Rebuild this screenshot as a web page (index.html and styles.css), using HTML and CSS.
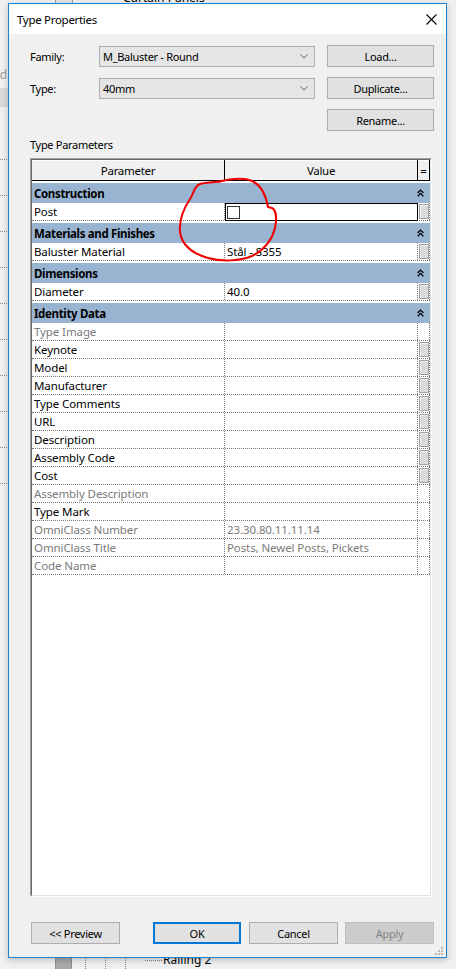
FILE: index.html
```html
<!DOCTYPE html>
<html>
<head>
<meta charset="utf-8">
<title>Type Properties</title>
<link rel="stylesheet" href="styles.css">
</head>
<body>
<div class="desk">
  <div class="bg-top-box"></div>
  <div class="bg-top-text">Curtain Panels</div>
  <div class="bg-left">
    <div class="bg-left-text">Id</div>
    <div class="bg-left-band"></div>
    <div class="bg-left-lines"></div>
  </div>
  <div class="bg-bottom">
    <div class="bg-bottom-box"></div>
    <div class="bg-vdots d1"></div>
    <div class="bg-vdots d2"></div>
    <div class="bg-vdots d3"></div>
    <div class="bg-leader"></div>
    <div class="bg-bottom-text">Railing 2</div>
  </div>

  <div class="dialog">
    <div class="titlebar">
      <span class="title">Type Properties</span>
      <svg class="close" width="11" height="11" viewBox="0 0 11 11"><path d="M0.5 0.5 L10.5 10.5 M10.5 0.5 L0.5 10.5" stroke="#000" stroke-width="1.1" fill="none"/></svg>
    </div>
    <div class="body">
      <div class="form">
        <span class="flabel">Family:</span>
        <div class="combo"><span>M_Baluster - Round</span><svg width="8" height="5" viewBox="0 0 8 5"><path d="M0.5 0.5 L4 4 L7.5 0.5" stroke="#606060" fill="none" stroke-width="1"/></svg></div>
        <button class="btn">Load...</button>
        <span class="flabel">Type:</span>
        <div class="combo"><span>40mm</span><svg width="8" height="5" viewBox="0 0 8 5"><path d="M0.5 0.5 L4 4 L7.5 0.5" stroke="#606060" fill="none" stroke-width="1"/></svg></div>
        <button class="btn">Duplicate...</button>
        <span></span>
        <span></span>
        <button class="btn">Rename...</button>
      </div>

      <div class="section-label">Type Parameters</div>

      <div class="grid-outer">
        <div class="grid-inner">
          <div class="ghead">
            <div>Parameter</div>
            <div>Value</div>
            <div>=</div>
          </div>

          <div class="band"><span>Construction</span><svg class="chev" width="7" height="8" viewBox="0 0 7 8"><path d="M0.6 4 L3.5 1.1 L6.4 4 M0.6 7.4 L3.5 4.5 L6.4 7.4" stroke="#000" stroke-width="1.3" fill="none"/></svg></div>
          <div class="row"><div class="p">Post</div><div class="v edit"><span class="check"></span></div><div class="b"><span class="mini"></span></div></div>

          <div class="band"><span>Materials and Finishes</span><svg class="chev" width="7" height="8" viewBox="0 0 7 8"><path d="M0.6 4 L3.5 1.1 L6.4 4 M0.6 7.4 L3.5 4.5 L6.4 7.4" stroke="#000" stroke-width="1.3" fill="none"/></svg></div>
          <div class="row"><div class="p">Baluster Material</div><div class="v">Stål - S355</div><div class="b"><span class="mini"></span></div></div>

          <div class="band"><span>Dimensions</span><svg class="chev" width="7" height="8" viewBox="0 0 7 8"><path d="M0.6 4 L3.5 1.1 L6.4 4 M0.6 7.4 L3.5 4.5 L6.4 7.4" stroke="#000" stroke-width="1.3" fill="none"/></svg></div>
          <div class="row"><div class="p">Diameter</div><div class="v">40.0</div><div class="b"><span class="mini"></span></div></div>

          <div class="band"><span>Identity Data</span><svg class="chev" width="7" height="8" viewBox="0 0 7 8"><path d="M0.6 4 L3.5 1.1 L6.4 4 M0.6 7.4 L3.5 4.5 L6.4 7.4" stroke="#000" stroke-width="1.3" fill="none"/></svg></div>
          <div class="row"><div class="p gray">Type Image</div><div class="v"></div><div class="b"></div></div>
          <div class="row"><div class="p">Keynote</div><div class="v"></div><div class="b"><span class="mini"></span></div></div>
          <div class="row"><div class="p">Model</div><div class="v"></div><div class="b"><span class="mini"></span></div></div>
          <div class="row"><div class="p">Manufacturer</div><div class="v"></div><div class="b"><span class="mini"></span></div></div>
          <div class="row"><div class="p">Type Comments</div><div class="v"></div><div class="b"><span class="mini"></span></div></div>
          <div class="row"><div class="p">URL</div><div class="v"></div><div class="b"><span class="mini"></span></div></div>
          <div class="row"><div class="p">Description</div><div class="v"></div><div class="b"><span class="mini"></span></div></div>
          <div class="row"><div class="p">Assembly Code</div><div class="v"></div><div class="b"><span class="mini"></span></div></div>
          <div class="row"><div class="p">Cost</div><div class="v"></div><div class="b"><span class="mini"></span></div></div>
          <div class="row"><div class="p gray">Assembly Description</div><div class="v"></div><div class="b"></div></div>
          <div class="row"><div class="p">Type Mark</div><div class="v"></div><div class="b"></div></div>
          <div class="row"><div class="p gray">OmniClass Number</div><div class="v gray">23.30.80.11.11.14</div><div class="b"></div></div>
          <div class="row"><div class="p gray">OmniClass Title</div><div class="v gray">Posts, Newel Posts, Pickets</div><div class="b"></div></div>
          <div class="row"><div class="p gray">Code Name</div><div class="v"></div><div class="b"></div></div>
        </div>
      </div>

      <div class="actions">
        <button class="btn preview">&lt;&lt; Preview</button>
        <button class="btn ok">OK</button>
        <button class="btn cancel">Cancel</button>
        <button class="btn apply">Apply</button>
      </div>
    </div>
    <svg class="grip" width="8" height="8" viewBox="0 0 8 8">
      <rect x="6" y="0" width="2" height="2" fill="#b8b8b8"/>
      <rect x="3" y="3" width="2" height="2" fill="#b8b8b8"/>
      <rect x="6" y="3" width="2" height="2" fill="#b8b8b8"/>
      <rect x="0" y="6" width="2" height="2" fill="#b8b8b8"/>
      <rect x="3" y="6" width="2" height="2" fill="#b8b8b8"/>
      <rect x="6" y="6" width="2" height="2" fill="#b8b8b8"/>
    </svg>
  </div>

  <svg class="markup" width="456" height="969" viewBox="0 0 456 969">
    <path d="M218 182 C230 179 243 177 252 181 C261 185 266 196 268 207 L272 208 C276 210 277 218 275 228 C272 240 264 250 252 256 C240 261 222 262 208 258 C194 254 182 246 180 232 C179 220 184 208 190 199 C194 193 194 186 200 184 C206 182 212 183 222 181" stroke="#ee0000" stroke-width="2" fill="none" stroke-linecap="round" stroke-linejoin="round"/>
  </svg>
</div>
</body>
</html>
```

FILE: styles.css
```css
html, body {
  margin: 0;
  padding: 0;
}

body {
  background: #f0f0f0;
  font-family: "Segoe UI", "Noto Sans", "DejaVu Sans", sans-serif;
  font-size: 11px;
  letter-spacing: -0.3px;
  color: #000;
}

.desk {
  position: relative;
  width: 456px;
  height: 969px;
  overflow: hidden;
  background: #f0f0f0;
}

/* background window fragments */
.bg-top-box {
  position: absolute;
  left: 55px;
  top: -4px;
  width: 16px;
  height: 6px;
  border: 1px solid #9a9a9a;
  background: #e4e4e4;
}

.bg-top-text {
  position: absolute;
  left: 123px;
  top: -11px;
  font-size: 12px;
  letter-spacing: 0;
  color: #000;
}

.bg-left {
  position: absolute;
  left: 0;
  top: 0;
  width: 8px;
  height: 969px;
}

.bg-left-text {
  position: absolute;
  left: -4px;
  top: 66px;
  font-size: 12px;
  color: #9a9a9a;
}

.bg-left-band {
  position: absolute;
  left: 0;
  top: 88px;
  width: 8px;
  height: 19px;
  background: #dadada;
}

.bg-left-lines {
  position: absolute;
  left: 0;
  top: 124px;
  width: 8px;
  height: 360px;
  background-image: repeating-linear-gradient(to bottom, transparent 0, transparent 35px, #8a8a8a 35px, #8a8a8a 36px);
  -webkit-mask-image: repeating-linear-gradient(to right, #000 0, #000 1px, transparent 1px, transparent 2px);
  mask-image: repeating-linear-gradient(to right, #000 0, #000 1px, transparent 1px, transparent 2px);
}

.bg-bottom {
  position: absolute;
  left: 0;
  top: 950px;
  width: 456px;
  height: 19px;
}

.bg-bottom-box {
  position: absolute;
  left: 55px;
  top: 0;
  width: 15px;
  height: 19px;
  border-left: 1px solid #8f8f8f;
  border-right: 1px solid #8f8f8f;
  background: #a9a9a9;
}

.bg-vdots {
  position: absolute;
  top: 0;
  width: 1px;
  height: 19px;
  border-left: 1px dotted #8a8a8a;
}

.bg-vdots.d1 { left: 85px; }
.bg-vdots.d2 { left: 105px; }
.bg-vdots.d3 { left: 125px; }

.bg-leader {
  position: absolute;
  left: 145px;
  top: 10px;
  width: 17px;
  border-top: 1px dotted #8a8a8a;
}

.bg-bottom-text {
  position: absolute;
  left: 163px;
  top: 1px;
  font-size: 12px;
  letter-spacing: 0;
}

/* dialog */
.dialog {
  position: absolute;
  left: 8px;
  top: 3px;
  width: 439px;
  height: 955px;
  box-sizing: border-box;
  border: 1px solid #1883d7;
  background: #f0f0f0;
  display: flex;
  flex-direction: column;
  box-shadow: 0 2px 6px rgba(0, 0, 0, 0.22);
}

.titlebar {
  flex: none;
  height: 30px;
  background: #fff;
  display: flex;
  align-items: center;
  justify-content: space-between;
  padding: 0 9px 0 8px;
}

.title {
  font-size: 11.5px;
  letter-spacing: -0.3px;
}

.body {
  flex: 1;
  display: flex;
  flex-direction: column;
  padding: 11px 12px 0 21px;
}

.form {
  display: grid;
  grid-template-columns: 57px 216px 107px;
  grid-template-rows: 22px 22px 22px;
  column-gap: 12px;
  row-gap: 10px;
  align-items: center;
}

.combo {
  height: 21px;
  box-sizing: border-box;
  border: 1px solid #adadad;
  background: #e5e5e5;
  display: flex;
  align-items: center;
  justify-content: space-between;
  padding: 0 6px 0 3px;
}

.btn {
  height: 22px;
  box-sizing: border-box;
  border: 1px solid #adadad;
  background: #e1e1e1;
  font: inherit;
  letter-spacing: inherit;
  color: #000;
  padding: 0;
  margin: 0;
  display: flex;
  align-items: center;
  justify-content: center;
}

.section-label {
  margin-top: 6px;
  line-height: 16px;
  margin-bottom: 5px;
}

.grid-outer {
  height: 739px;
  box-sizing: border-box;
  border: 1px solid;
  border-color: #a0a0a0 #ffffff #ffffff #a0a0a0;
  margin-right: 2px;
  font-size: 11.5px;
  letter-spacing: -0.1px;
}

.grid-inner {
  height: 100%;
  box-sizing: border-box;
  border: 1px solid;
  border-color: #696969 #e3e3e3 #e3e3e3 #696969;
  background: #fff;
}

.ghead {
  display: grid;
  grid-template-columns: 193px 193px 12px;
  height: 21px;
  box-sizing: border-box;
  border-bottom: 1px solid #000;
  background: #f0f0f0;
  letter-spacing: -0.3px;
}

.ghead > div {
  border-right: 1px solid #000;
  display: flex;
  align-items: center;
  justify-content: center;
  box-shadow: inset 0 1px 0 #fff;
}

.band {
  height: 20px;
  border-top: 2px solid #fff;
  background: #99b4d1;
  display: flex;
  align-items: center;
  font-weight: bold;
  letter-spacing: -0.35px;
  padding-left: 2px;
}

.chev {
  margin-left: auto;
  margin-right: 6px;
}

.row {
  display: grid;
  grid-template-columns: 193px 193px 12px;
  height: 18px;
  box-sizing: border-box;
  border-bottom: 1px dotted #777;
}

.row > div {
  border-right: 1px dotted #777;
  display: flex;
  align-items: center;
  min-width: 0;
  white-space: nowrap;
  overflow: hidden;
}

.p, .v {
  padding-left: 2px;
}

.gray {
  color: #7a7a7a;
}

.row > .v.edit {
  border: 1px solid #000;
  height: 18px;
  box-sizing: border-box;
  margin-bottom: -1px;
  align-self: start;
  padding-left: 1px;
}

.check {
  width: 13px;
  height: 13px;
  box-sizing: border-box;
  border: 1px solid #333;
  background: #fff;
}

.mini {
  align-self: flex-start;
  width: 10px;
  height: 15px;
  box-sizing: border-box;
  margin: 1px 0 0 1px;
  border: 1px solid #a0a0a0;
  background: #dadada;
  box-shadow: inset 1px 1px 0 #f2f2f2;
}

.actions {
  margin-top: 25px;
  display: flex;
  padding-left: 1px;
}

.preview { width: 89px; }

.ok {
  width: 88px;
  margin-left: auto;
  border: 2px solid #0078d7;
}

.cancel {
  width: 89px;
  margin-left: 8px;
}

.apply {
  width: 89px;
  margin-left: 7px;
  background: #cccccc;
  border-color: #bfbfbf;
  color: #838383;
}

.grip {
  position: absolute;
  right: 3px;
  bottom: 2px;
}

.markup {
  position: absolute;
  left: 0;
  top: 0;
  pointer-events: none;
}
```
